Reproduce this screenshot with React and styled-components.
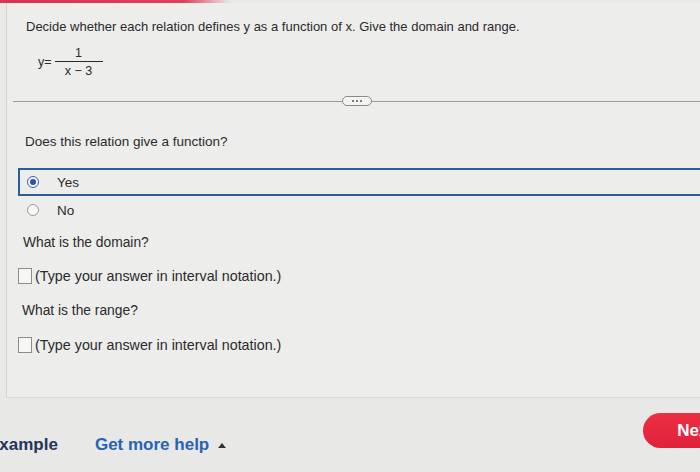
import React from "react";
import styled, { createGlobalStyle } from "styled-components";

const GlobalStyle = createGlobalStyle`
    html, body {
        margin: 0;
        padding: 0;
        background: #e8e8e6;
        overflow: hidden;
    }
    body {
        font-family: "Liberation Sans", Arial, sans-serif;
        color: #2b2b2b;
    }
`;

const Page = styled.div`
    width: 700px;
    height: 472px;
    display: flex;
    flex-direction: column;
    overflow: hidden;
`;

const TopBar = styled.div`
    height: 3px;
    background: linear-gradient(90deg, #d8334f 0%, #e0405a 80%, #e8e8e6 100%);
    width: 230px;
    flex-shrink: 0;
`;

const Card = styled.div`
    margin-left: 6px;
    height: 395px;
    box-sizing: border-box;
    background: #ededeb;
    border-left: 1px solid #d2d2d0;
    border-bottom: 1px solid #d9d9d7;
    padding-top: 16px;
    display: flex;
    flex-direction: column;
`;

const Text = styled.div`
    font-size: ${(p) => p.$size || 13}px;
    line-height: 16px;
    padding-left: ${(p) => p.$indent || 19}px;
    margin-top: ${(p) => p.$top || 0}px;
`;

const Equation = styled.div`
    display: flex;
    align-items: center;
    gap: 3px;
    padding-left: 31px;
    margin-top: 11px;
    font-size: 12.5px;
`;

const Fraction = styled.span`
    display: inline-flex;
    flex-direction: column;
    align-items: center;
    width: 48px;
    line-height: 14px;
`;

const Numerator = styled.span`
    width: 100%;
    text-align: center;
    border-bottom: 1px solid #2b2b2b;
    padding-bottom: 1px;
`;

const Denominator = styled.span`
    padding-top: 2px;
`;

const Separator = styled.div`
    margin: 18px 0 0 6px;
    height: 10px;
    display: flex;
    align-items: center;
`;

const Line = styled.div`
    flex: 1;
    height: 1px;
    background: #9c9c9a;
`;

const More = styled.div`
    width: 28px;
    height: 8px;
    border: 1px solid #8a8a8a;
    border-radius: 5px;
    background: #f3f3f1;
    display: flex;
    align-items: center;
    justify-content: center;
    gap: 2px;
`;

const Dot = styled.span`
    width: 2px;
    height: 2px;
    border-radius: 50%;
    background: #555;
`;

const Options = styled.div`
    margin-top: 18px;
    display: flex;
    flex-direction: column;
`;

const Option = styled.label`
    display: flex;
    align-items: center;
    gap: 18px;
    height: 28px;
    margin-left: 11px;
    margin-right: -10px;
    padding-left: 7px;
    font-size: 13.5px;
    border: 2px solid ${(p) => (p.$selected ? "#2e5e97" : "transparent")};
    box-sizing: border-box;
`;

const Radio = styled.span`
    width: 12px;
    height: 12px;
    border-radius: 50%;
    box-sizing: border-box;
    border: 1px solid ${(p) => (p.$checked ? "#3a5fb0" : "#9a9a9a")};
    background: #f7f7f7;
    display: flex;
    align-items: center;
    justify-content: center;

    &::after {
        content: "";
        width: 6px;
        height: 6px;
        border-radius: 50%;
        background: ${(p) => (p.$checked ? "#2c4fb6" : "transparent")};
    }
`;

const AnswerRow = styled.div`
    display: flex;
    align-items: center;
    gap: 3px;
    height: 16px;
    padding-left: 11px;
    margin-top: ${(p) => p.$top}px;
    font-size: 14.3px;
`;

const AnswerBox = styled.span`
    width: 14px;
    height: 16px;
    border: 1px solid #8d8d8d;
    background: #f6f6f4;
    box-sizing: border-box;
`;

const Footer = styled.div`
    flex: 1;
    display: flex;
    align-items: flex-start;
`;

const FooterLink = styled.a`
    font-size: 17px;
    font-weight: bold;
    color: ${(p) => p.$color};
    text-decoration: none;
    margin-top: 37px;
    margin-left: ${(p) => p.$left}px;
    display: flex;
    align-items: center;
    gap: 9px;
    white-space: nowrap;
`;

const Caret = styled.span`
    width: 0;
    height: 0;
    border-left: 4px solid transparent;
    border-right: 4px solid transparent;
    border-bottom: 5px solid #333;
    margin-top: 1px;
`;

const NextButton = styled.button`
    margin-left: auto;
    margin-right: -48px;
    margin-top: 15px;
    height: 35px;
    padding: 0 34px;
    border: none;
    border-radius: 18px;
    background: linear-gradient(180deg, #ec2f44 0%, #e0213a 100%);
    color: #fff;
    font-family: "Liberation Sans", Arial, sans-serif;
    font-size: 17px;
    font-weight: bold;
`;

export default function App() {
    return (
        <Page>
            <GlobalStyle />
            <TopBar />
            <Card>
                <Text $indent={19}>
                    Decide whether each relation defines y as a function of x. Give the domain and range.
                </Text>
                <Equation>
                    <span>y=</span>
                    <Fraction>
                        <Numerator>1</Numerator>
                        <Denominator>x − 3</Denominator>
                    </Fraction>
                </Equation>
                <Separator>
                    <Line />
                    <More>
                        <Dot />
                        <Dot />
                        <Dot />
                    </More>
                    <Line />
                </Separator>
                <Text $indent={18} $top={28} $size={13.5}>Does this relation give a function?</Text>
                <Options>
                    <Option $selected>
                        <Radio $checked />
                        Yes
                    </Option>
                    <Option>
                        <Radio />
                        No
                    </Option>
                </Options>
                <Text $indent={16} $top={11} $size={13.8}>What is the domain?</Text>
                <AnswerRow $top={17}>
                    <AnswerBox />
                    (Type your answer in interval notation.)
                </AnswerRow>
                <Text $indent={15} $top={19} $size={13.8}>What is the range?</Text>
                <AnswerRow $top={18}>
                    <AnswerBox />
                    (Type your answer in interval notation.)
                </AnswerRow>
            </Card>
            <Footer>
                <FooterLink $color="#23355a" $left={-12}>Example</FooterLink>
                <FooterLink $color="#2862b5" $left={37}>
                    Get more help <Caret />
                </FooterLink>
                <NextButton>Next</NextButton>
            </Footer>
        </Page>
    );
}
